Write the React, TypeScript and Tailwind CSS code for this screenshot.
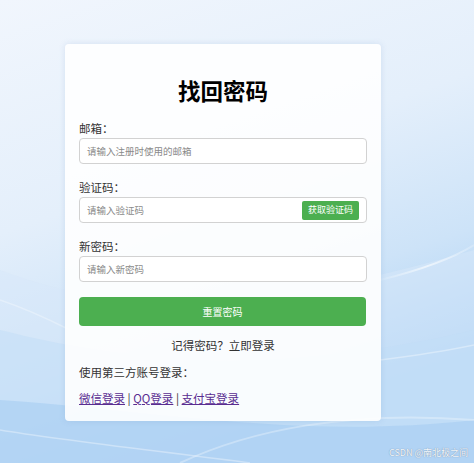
import React from "react";

const font = '"Noto Sans CJK SC", "Noto Sans", sans-serif';

function Background() {
  return (
    <svg
      className="absolute inset-0 h-full w-full"
      viewBox="0 0 474 463"
      preserveAspectRatio="none"
    >
      <defs>
        <linearGradient id="bg" x1="0" y1="0" x2="0.35" y2="1">
          <stop offset="0" stopColor="#f1f6fd" />
          <stop offset="0.45" stopColor="#e4effb" />
          <stop offset="0.75" stopColor="#cde3f8" />
          <stop offset="1" stopColor="#a9d0f4" />
        </linearGradient>
        <linearGradient id="w1" x1="0" y1="0" x2="1" y2="0">
          <stop offset="0" stopColor="#ffffff" stopOpacity="0.1" />
          <stop offset="0.5" stopColor="#ffffff" stopOpacity="0.6" />
          <stop offset="1" stopColor="#ffffff" stopOpacity="0.2" />
        </linearGradient>
      </defs>
      <rect width="474" height="463" fill="url(#bg)" />
      <path d="M0 270 C 80 300, 200 330, 474 250 L474 463 L0 463 Z" fill="#d7e8fa" opacity="0.5" />
      <path d="M0 330 C 120 360, 260 380, 474 330 L474 463 L0 463 Z" fill="#c2ddf7" opacity="0.5" />
      <path d="M0 400 C 150 410, 300 440, 474 420 L474 463 L0 463 Z" fill="#a6cdf2" opacity="0.6" />
      <path d="M380 280 C 420 270, 450 260, 474 245" stroke="url(#w1)" strokeWidth="2" fill="none" />
      <path d="M380 360 C 420 355, 450 350, 474 345" stroke="#ffffff" strokeOpacity="0.35" strokeWidth="1.5" fill="none" />
      <path d="M0 300 C 30 310, 50 320, 70 330" stroke="#ffffff" strokeOpacity="0.3" strokeWidth="1.5" fill="none" />
      <path d="M0 430 C 60 440, 150 450, 250 463" stroke="#ffffff" strokeOpacity="0.35" strokeWidth="1.5" fill="none" />
      <path d="M180 463 C 250 430, 350 410, 474 420" stroke="#ffffff" strokeOpacity="0.3" strokeWidth="2" fill="none" />
    </svg>
  );
}

function Field({ label, placeholder, button }: { label: string; placeholder: string; button?: string }) {
  return (
    <div className="flex flex-col">
      <div className="text-[11.5px] leading-[18px] text-[#333]">{label}</div>
      <div className="mt-px flex h-[26px] items-center rounded-[4px] border border-[#d2d2d2] bg-white pl-[7px] pr-[7px]">
        <span className="flex-1 text-[9.5px] text-[#8a8a8a]">{placeholder}</span>
        {button && (
          <span className="flex h-[19px] items-center rounded-[2px] bg-[#4caf50] px-[6px] text-[9px] text-white">
            {button}
          </span>
        )}
      </div>
    </div>
  );
}

export default function App() {
  return (
    <div className="relative h-[463px] w-[474px] overflow-hidden" style={{ fontFamily: font }}>
      <Background />
      <div className="relative flex pl-[65px] pt-[44px]">
        <div className="flex w-[316px] flex-col rounded-[4px] bg-white/90 px-[14px] pb-[14px] pt-[30px] shadow-[0_0_6px_rgba(100,140,190,0.18)]">
          <h1 className="text-center text-[22.5px] font-bold leading-[32px] text-black">找回密码</h1>
          <div className="mt-[13px] flex flex-col gap-[14px]">
            <Field label="邮箱：" placeholder="请输入注册时使用的邮箱" />
            <Field label="验证码：" placeholder="请输入验证码" button="获取验证码" />
            <Field label="新密码：" placeholder="请输入新密码" />
          </div>
          <div className="mt-[15px] flex h-[29px] w-[287px] items-center justify-center rounded-[4px] bg-[#4caf50] text-[10px] text-white">
            重置密码
          </div>
          <div className="mt-[10px] text-center text-[11.5px] leading-[18px] text-[#333]">记得密码？立即登录</div>
          <div className="mt-[9px] text-[11.5px] leading-[18px] text-[#333]">使用第三方账号登录：</div>
          <div className="mt-[8px] text-[11.5px] leading-[18px] text-[#333]">
            <span className="text-[#5a2d91] underline">微信登录</span>
            <span> | </span>
            <span className="text-[#5a2d91] underline">QQ登录</span>
            <span> | </span>
            <span className="text-[#5a2d91] underline">支付宝登录</span>
          </div>
        </div>
      </div>
      <div className="absolute bottom-[4px] right-[6px] text-[9px] text-[#f4f8fc] [text-shadow:0_0_1px_rgba(90,110,140,0.9)]">
        CSDN @南北极之间
      </div>
    </div>
  );
}
